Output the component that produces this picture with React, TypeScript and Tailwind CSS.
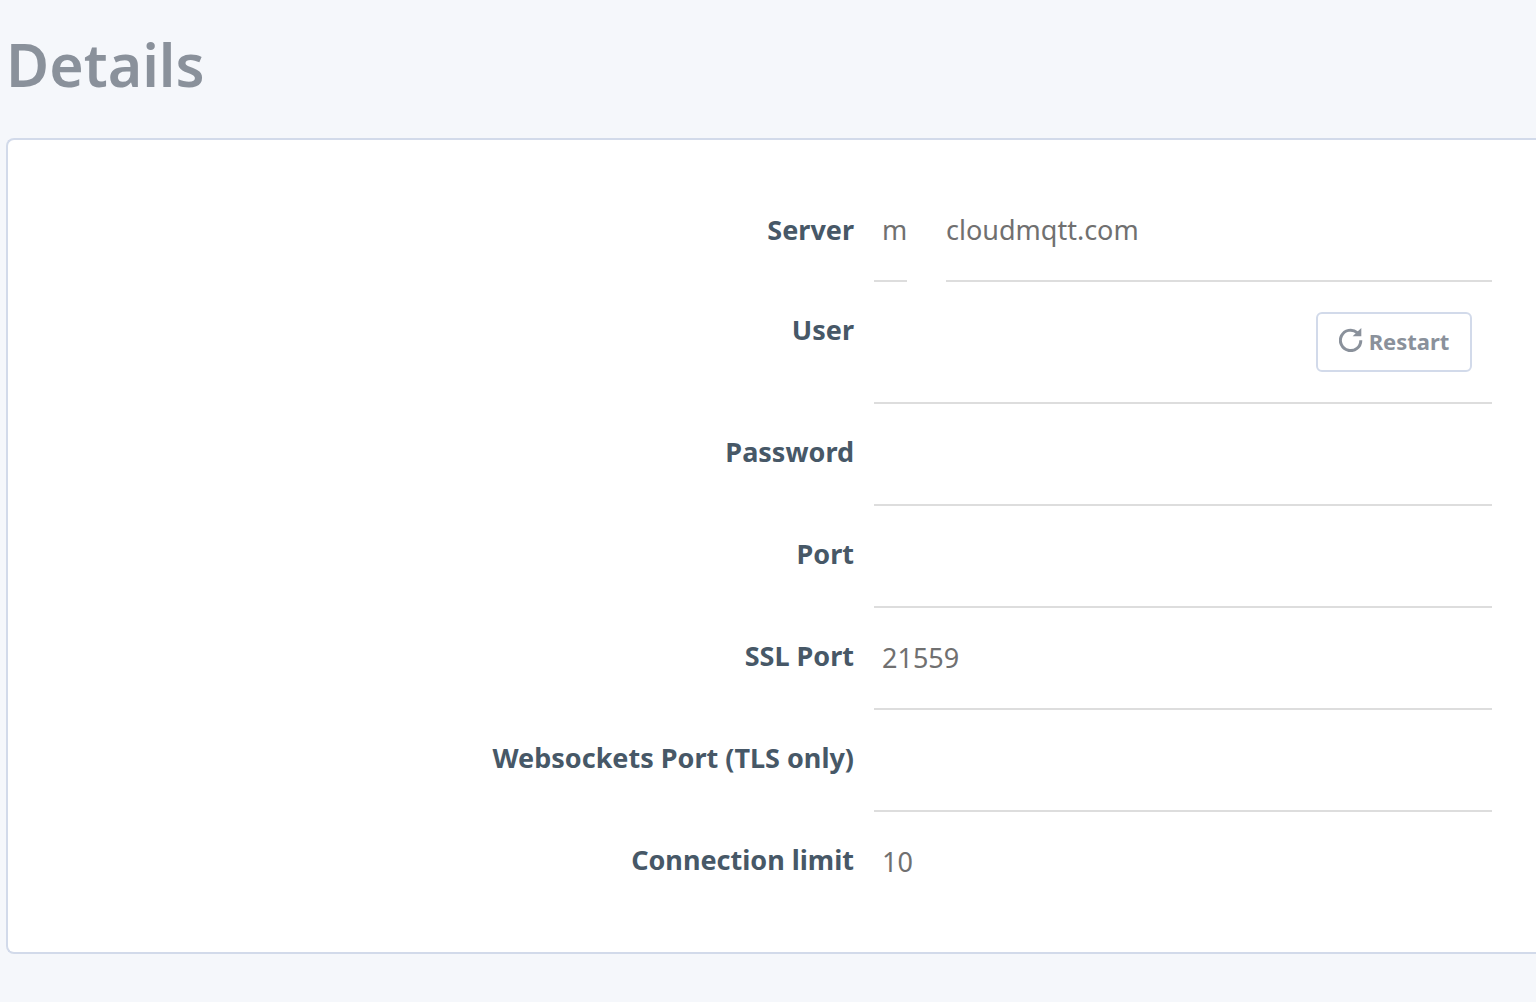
import type { ReactNode } from "react";

type Detail = {
  label: string;
  value?: string;
  action?: ReactNode;
};

const DETAILS: Detail[] = [
  { label: "User", action: <RestartButton /> },
  { label: "Password" },
  { label: "Port" },
  { label: "SSL Port", value: "21559" },
  { label: "Websockets Port (TLS only)" },
  { label: "Connection limit", value: "10" },
];

export default function App() {
  return (
    <main className="min-h-screen bg-[#f5f7fb] pt-6 pb-12 pl-1.5 font-['Noto_Sans',sans-serif]">
      <h1 className="text-[59px] leading-[80px] font-semibold text-[#8a919b]">Details</h1>
      <section className="mt-[34px] rounded-l-lg border-2 border-r-0 border-[#d2daea] bg-white py-10 pr-11">
        <dl className="text-[27px]">
          <div className="grid grid-cols-[846fr_618fr] gap-5">
            <Label className="leading-[100px]">Server</Label>
            {/* host is split around the hidden instance name */}
            <dd className="flex gap-[39px] leading-[100px] text-[#707070]">
              <span className="w-[33px] border-b-2 border-[#dddddd] pl-2">m</span>
              <span className="flex-1 border-b-2 border-[#dddddd]">cloudmqtt.com</span>
            </dd>
          </div>
          {DETAILS.map((d) => (
            <DetailRow key={d.label} {...d} />
          ))}
        </dl>
      </section>
    </main>
  );
}

function Label({ children, className }: { children: ReactNode; className: string }) {
  return <dt className={`text-right font-bold text-[#475867] ${className}`}>{children}</dt>;
}

function DetailRow({ label, value, action }: Detail) {
  return (
    <div className="group grid grid-cols-[846fr_618fr] gap-5">
      <Label className="leading-[96px]">{label}</Label>
      <dd className="flex min-h-[102px] items-start justify-between border-b-2 border-[#dddddd] pl-2 leading-[100px] text-[#707070] group-last:min-h-[100px] group-last:border-b-0">
        <span>{value}</span>
        {action}
      </dd>
    </div>
  );
}

function RestartButton() {
  return (
    <button
      type="button"
      className="my-[30px] mr-5 flex h-[60px] w-[156px] items-center justify-center gap-1.5 rounded-md border-2 border-[#d2daea] pb-0.5 text-[22px] leading-8 font-bold text-[#8a919b]"
    >
      <svg viewBox="0 0 24 24" className="mb-0.5 size-6" aria-hidden="true">
        <path
          d="M21.8 12.3A10.2 10.2 0 1 1 18.2 4.6"
          fill="none"
          stroke="currentColor"
          strokeWidth="3"
        />
        <path d="M22.3 0V8.3H13.6z" fill="currentColor" />
      </svg>
      Restart
    </button>
  );
}
